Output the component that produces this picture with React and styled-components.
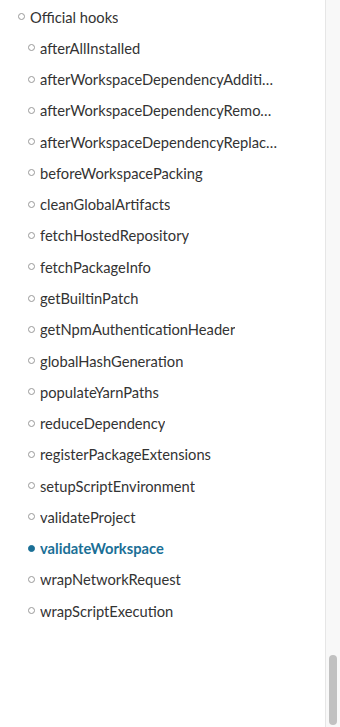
import styled, { createGlobalStyle } from 'styled-components'

const GlobalStyle = createGlobalStyle`
  html, body {
    margin: 0;
    padding: 0;
    background: #fff;
  }
  body {
    font-family: Lato, "Open Sans", sans-serif;
  }
`

const hooks = [
  'afterAllInstalled',
  'afterWorkspaceDependencyAddition',
  'afterWorkspaceDependencyRemoval',
  'afterWorkspaceDependencyReplacement',
  'beforeWorkspacePacking',
  'cleanGlobalArtifacts',
  'fetchHostedRepository',
  'fetchPackageInfo',
  'getBuiltinPatch',
  'getNpmAuthenticationHeader',
  'globalHashGeneration',
  'populateYarnPaths',
  'reduceDependency',
  'registerPackageExtensions',
  'setupScriptEnvironment',
  'validateProject',
  'validateWorkspace',
  'wrapNetworkRequest',
  'wrapScriptExecution',
]

const App = () => {
  return (
    <Page>
      <GlobalStyle />
      <Sidebar>
        <Tree>
          <li>
            <Label>
              <Bullet />
              <Text>Official hooks</Text>
            </Label>
            <SubTree>
              {hooks.map((name) => {
                const active = name === 'validateWorkspace'
                return (
                  <li key={name}>
                    <Label $active={active}>
                      <Bullet $active={active} />
                      <Text>{name}</Text>
                    </Label>
                  </li>
                )
              })}
            </SubTree>
          </li>
        </Tree>
      </Sidebar>
      <ScrollTrack>
        <ScrollThumb />
      </ScrollTrack>
    </Page>
  )
}

const Page = styled.div`
  display: flex;
  height: 727px;
  width: 340px;
  overflow: hidden;
`

const Sidebar = styled.nav`
  flex: 1;
  border-right: 1px solid #e6e6e6;
`

const Tree = styled.ul`
  list-style: none;
  margin: 0;
  padding: 1px 0 0 18px;
`

const SubTree = styled.ul`
  list-style: none;
  margin: 0;
  padding: 0 0 0 10px;
`

const Label = styled.a`
  display: flex;
  align-items: center;
  height: 31.28px;
  width: 250px;
  font-size: 14.7px;
  color: ${(p) => (p.$active ? '#1a6f96' : '#333')};
  font-weight: ${(p) => (p.$active ? 700 : 400)};
  white-space: nowrap;
`

const Bullet = styled.span`
  flex: none;
  width: 5px;
  height: 5px;
  border-radius: 50%;
  margin-right: 5px;
  border: 1px solid ${(p) => (p.$active ? '#1a6f96' : '#999')};
  background: ${(p) => (p.$active ? '#1a6f96' : 'transparent')};
`

const Text = styled.span`
  min-width: 0;
  overflow: hidden;
  text-overflow: ellipsis;
`

const ScrollTrack = styled.div`
  width: 14px;
  background: #f8f8f8;
  display: flex;
  flex-direction: column;
  justify-content: flex-end;
  align-items: center;
  padding-bottom: 2px;
`

const ScrollThumb = styled.div`
  width: 8px;
  height: 70px;
  border-radius: 4px;
  background: #c1c1c1;
`

export default App
